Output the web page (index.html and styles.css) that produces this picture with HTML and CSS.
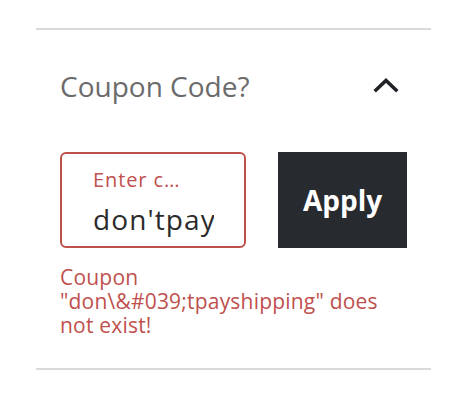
FILE: index.html
```html
<!DOCTYPE html>
<html>
<head>
<meta name="viewport" content="width=device-width, initial-scale=1">
<link rel="stylesheet" href="styles.css">
</head>
<body>

<div class="coupon">
  <div class="coupon-head">
    <h2>Coupon Code?</h2>
    <svg class="chevron" width="26" height="16" viewBox="0 0 26 16">
      <path d="M3 12 L13 2.5 L23 12" fill="none" stroke="#1f2226" stroke-width="3.6" stroke-linecap="square"/>
    </svg>
  </div>

  <form class="coupon-form" action="#">
    <div class="field">
      <label for="coupon">Enter coupon code</label>
      <input type="text" id="coupon" name="coupon" value="don'tpayshipping">
    </div>
    <button type="submit" class="applybtn">Apply</button>
  </form>

  <p class="error">Coupon "don\&amp;#039;tpayshipping" does not exist!</p>
</div>

</body>
</html>
```

FILE: styles.css
```css
body {
  margin: 0;
  padding: 28px 35px 0 36px;
  font-family: "Open Sans", Arial, sans-serif;
  background-color: white;
}

* {
  box-sizing: border-box;
}

/* Collapsible coupon block */
.coupon {
  border-top: 2px solid #d9d9de;
  border-bottom: 2px solid #d9d9de;
  padding-bottom: 31px;
}

.coupon-head {
  display: flex;
  align-items: center;
  justify-content: space-between;
  padding: 36px 32px 46px 24px;
}

.coupon-head h2 {
  margin: 0;
  font-size: 28px;
  line-height: 40px;
  font-weight: 400;
  color: #6b6b6b;
}

.chevron {
  display: block;
}

/* Input + button row */
.coupon-form {
  display: flex;
  gap: 32px;
  padding: 0 24px;
}

.field {
  position: relative;
  width: 186px;
  height: 96px;
  border: 2px solid #c0504d;
  border-radius: 6px;
}

.field label {
  position: absolute;
  top: 12px;
  left: 31px;
  max-width: 92px;
  white-space: nowrap;
  overflow: hidden;
  text-overflow: ellipsis;
  font-size: 20px;
  letter-spacing: 0.9px;
  color: #c0504d;
}

.field input {
  width: 100%;
  height: 100%;
  padding: 44px 30px 6px 31px;
  border: none;
  outline: none;
  background: transparent;
  font-family: inherit;
  font-size: 28px;
  letter-spacing: 1.1px;
  color: #2b2b2b;
}

.applybtn {
  width: 129px;
  height: 96px;
  border: none;
  background-color: #272a2f;
  color: white;
  font-family: inherit;
  font-size: 28px;
  font-weight: 700;
  cursor: pointer;
}

.error {
  margin: 17px 43px 0 24px;
  font-size: 21px;
  letter-spacing: 0.2px;
  line-height: 24px;
  color: #c0504d;
}
```
